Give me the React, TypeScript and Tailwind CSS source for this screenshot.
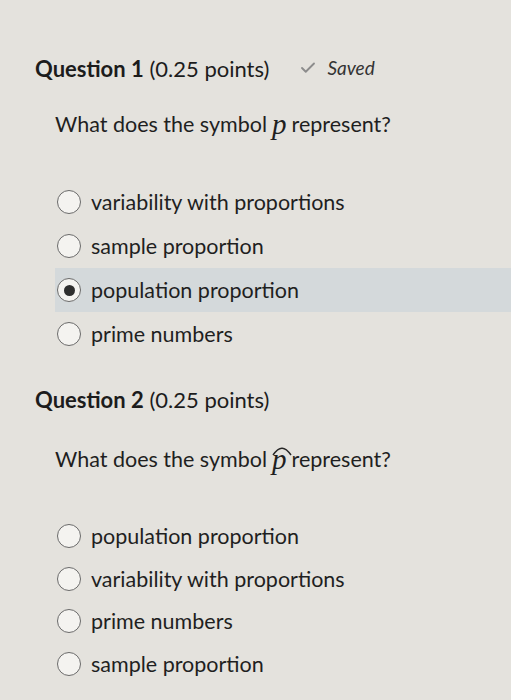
import { Check } from "lucide-react";

type Opt = { label: string; checked?: boolean };

const q1: Opt[] = [
  { label: "variability with proportions" },
  { label: "sample proportion" },
  { label: "population proportion", checked: true },
  { label: "prime numbers" },
];

const q2: Opt[] = [
  { label: "population proportion" },
  { label: "variability with proportions" },
  { label: "prime numbers" },
  { label: "sample proportion" },
];

function Radio({ checked }: { checked?: boolean }) {
  return (
    <span className="w-[24px] h-[24px] shrink-0 rounded-full border-[1.5px] border-[#6a6a6a] bg-[#f4f3f0] flex items-center justify-center">
      {checked && <span className="w-[11px] h-[11px] rounded-full bg-[#2e2e2e]" />}
    </span>
  );
}

function PSymbol({ hat }: { hat?: boolean }) {
  return (
    <span className="relative inline-block mx-[5px] font-['Liberation_Serif',serif] italic text-[29px] leading-none">
      p
      {hat && (
        <svg
          className="absolute left-[0px] top-[2px]"
          width="20"
          height="9"
          viewBox="0 0 20 9"
        >
          <path d="M1 8 Q6 1 10 1.2 Q14 1 19 8" fill="none" stroke="#262626" strokeWidth="1.5" />
        </svg>
      )}
    </span>
  );
}

function Question({
  n,
  hat,
  opts,
  saved,
  listClass,
  rowClass,
}: {
  n: number;
  hat?: boolean;
  opts: Opt[];
  saved?: boolean;
  listClass: string;
  rowClass: string;
}) {
  return (
    <section>
      <div className="flex items-center pl-[35px] h-[30px]">
        <h2 className="text-[22px] text-[#1c1c1c] whitespace-nowrap">
          <span className="font-bold">Question {n}</span>{" "}
          <span>(0.25 points)</span>
        </h2>
        {saved && (
          <span className="ml-[30px] flex items-center gap-[10px] text-[#333]">
            <Check className="w-[18px] h-[18px] text-[#8c8c8c]" strokeWidth={2.5} />
            <span className="italic text-[19px]">Saved</span>
          </span>
        )}
      </div>
      <p className={`pl-[55px] h-[28px] text-[21.5px] text-[#1f1f1f] flex items-center whitespace-nowrap ${hat ? "mt-[31px]" : "mt-[27px]"}`}>
        What does the symbol <PSymbol hat={hat} /> represent?
      </p>
      <ul className={listClass}>
        {opts.map((o) => (
          <li
            key={o.label}
            className={`ml-[55px] pl-[2px] flex items-center gap-[10px] text-[21.5px] text-[#1f1f1f] whitespace-nowrap ${rowClass} ${
              o.checked ? "bg-[#d4d9db]" : ""
            }`}
          >
            <Radio checked={o.checked} />
            <span>{o.label}</span>
          </li>
        ))}
      </ul>
    </section>
  );
}

export default function App() {
  return (
    <div className="w-[511px] h-[700px] overflow-hidden bg-[#e4e2dd] font-['Lato',sans-serif] pt-[53px]">
      <Question n={1} opts={q1} saved listClass="mt-[42px]" rowClass="h-[44px]" />
      <div className="mt-[28px]">
        <Question n={2} hat opts={q2} listClass="mt-[42px]" rowClass="h-[42.5px]" />
      </div>
    </div>
  );
}
